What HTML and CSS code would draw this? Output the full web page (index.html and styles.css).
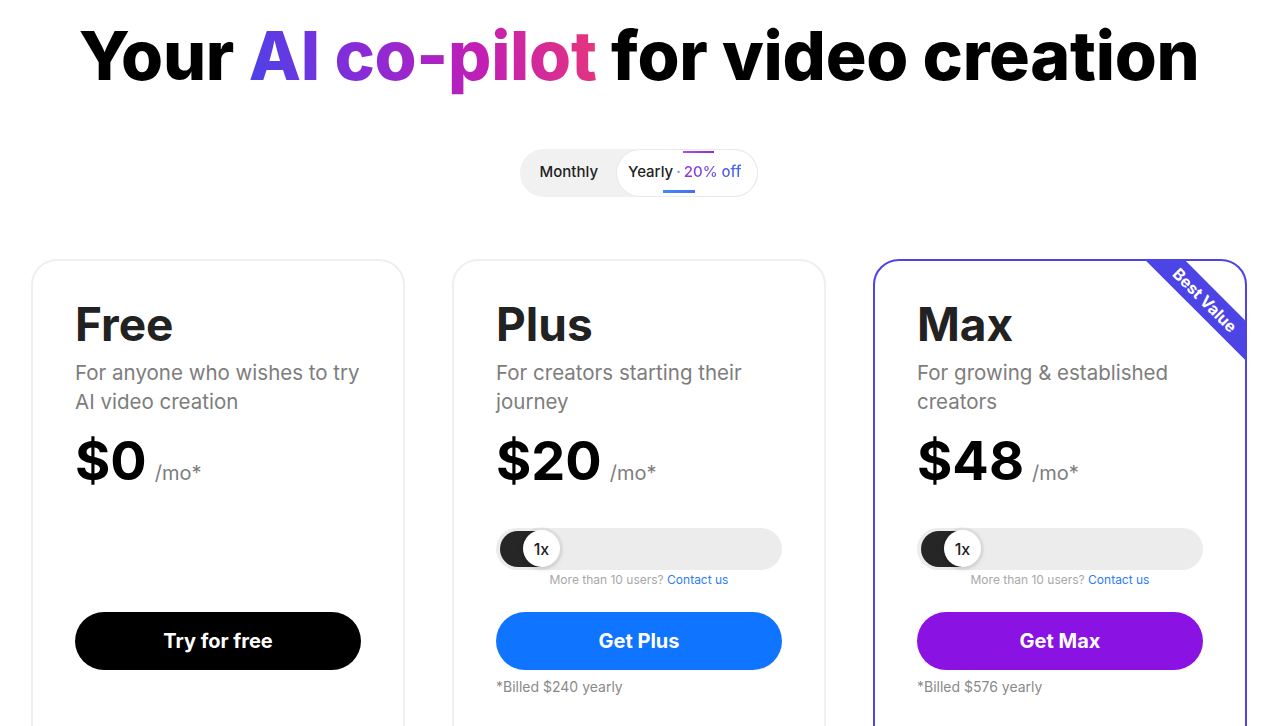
FILE: index.html
```html
<!DOCTYPE html>
<html lang="en">
<head>
<meta charset="utf-8">
<title>Pricing</title>
<link rel="stylesheet" href="styles.css">
</head>
<body>
<main class="page">
  <h1 class="hero">Your <span class="grad">AI co-pilot</span> for video creation</h1>

  <div class="toggle">
    <span class="opt">Monthly</span>
    <span class="opt active"><span class="glow-top"></span><span class="glow-bottom"></span><span>Yearly</span><span class="dot">·</span><span class="off">20% off</span></span>
  </div>

  <section class="cards">
    <article class="card">
      <h2 class="title">Free</h2>
      <p class="desc">For anyone who wishes to try AI video creation</p>
      <div class="price"><span class="amount">$0</span><span class="per">/mo*</span></div>
      <div class="seats"></div>
      <a class="btn btn-black">Try for free</a>
      <p class="billed"></p>
    </article>

    <article class="card">
      <h2 class="title">Plus</h2>
      <p class="desc">For creators starting their journey</p>
      <div class="price"><span class="amount">$20</span><span class="per">/mo*</span></div>
      <div class="seats">
        <div class="track"><span class="fill"></span><span class="knob">1x</span></div>
        <p class="more">More than 10 users? <a class="link">Contact us</a></p>
      </div>
      <a class="btn btn-blue">Get Plus</a>
      <p class="billed">*Billed $240 yearly</p>
    </article>

    <article class="card card-max">
      <div class="ribbon">Best Value</div>
      <h2 class="title">Max</h2>
      <p class="desc">For growing &amp; established creators</p>
      <div class="price"><span class="amount">$48</span><span class="per">/mo*</span></div>
      <div class="seats">
        <div class="track"><span class="fill"></span><span class="knob">1x</span></div>
        <p class="more">More than 10 users? <a class="link">Contact us</a></p>
      </div>
      <a class="btn btn-purple">Get Max</a>
      <p class="billed">*Billed $576 yearly</p>
    </article>
  </section>
</main>
</body>
</html>
```

FILE: styles.css
```css
* { box-sizing: border-box; }

html, body {
  margin: 0;
  padding: 0;
  background: #ffffff;
  font-family: "Inter", "Noto Sans", sans-serif;
  color: #222222;
  overflow: hidden;
}

.page {
  display: flex;
  flex-direction: column;
  align-items: center;
  padding-top: 14px;
  padding-left: 7px;
}

.hero {
  margin: 0;
  font-size: 68px;
  font-weight: 800;
  line-height: 82px;
  letter-spacing: -0.3px;
  color: #000000;
  text-align: center;
}

.grad {
  background: linear-gradient(75deg, #4b42e8 0%, #8b2ad6 35%, #c11fb4 65%, #e8377a 100%);
  -webkit-background-clip: text;
  background-clip: text;
  color: transparent;
}

.toggle {
  margin-top: 53px;
  display: flex;
  align-items: stretch;
  height: 48px;
  padding: 1px;
  background: #f1f1f1;
  border-radius: 24px;
}

.opt {
  display: flex;
  align-items: center;
  font-size: 15px;
  font-weight: 500;
  color: #222;
  padding: 0 19px 3px 19px;
}

.opt.active {
  position: relative;
  background: #ffffff;
  border-radius: 23px;
  padding: 0 16px 3px 11px;
  box-shadow: 0 0 0 1px #e9e9e9;
  gap: 3px;
}

.dot { color: #999; }

.off {
  background: linear-gradient(90deg, #9b2fd6 0%, #3b6cf2 100%);
  -webkit-background-clip: text;
  background-clip: text;
  color: transparent;
}

.glow-top {
  position: absolute;
  top: 1px;
  left: 66px;
  width: 31px;
  height: 2px;
  background: linear-gradient(90deg, #b04ee0, #8a2fd8);
}

.glow-bottom {
  position: absolute;
  bottom: 3px;
  left: 46px;
  width: 32px;
  height: 3px;
  background: linear-gradient(90deg, #3d8bf7, #4a6ef0);
}

.cards {
  margin-top: 62px;
  display: flex;
  gap: 47px;
  align-items: flex-start;
}

.card {
  position: relative;
  overflow: hidden;
  width: 374px;
  min-height: 520px;
  border: 2px solid #efefef;
  border-radius: 26px;
  padding: 36px 42px 0 42px;
  display: flex;
  flex-direction: column;
}

.card-max {
  border-color: #4c44e4;
}

.ribbon {
  position: absolute;
  top: 25px;
  right: -40px;
  width: 160px;
  height: 28px;
  background: #4c44e4;
  color: #ffffff;
  font-size: 16px;
  font-weight: 700;
  line-height: 28px;
  text-align: center;
  transform: rotate(45deg);
}

.title {
  margin: 0;
  font-size: 46px;
  font-weight: 700;
  line-height: 54px;
  color: #222;
}

.desc {
  margin: 7px 0 0 0;
  font-size: 20.5px;
  line-height: 29px;
  color: #7d7d7d;
  min-height: 58px;
}

.price {
  margin-top: 14px;
  display: flex;
  align-items: baseline;
  gap: 8px;
}

.amount {
  font-size: 54px;
  font-weight: 700;
  line-height: 62px;
  color: #000;
}

.per {
  font-size: 20px;
  color: #7d7d7d;
}

.seats {
  margin-top: 36px;
  height: 84px;
}

.track {
  position: relative;
  height: 42px;
  background: #ececec;
  border-radius: 21px;
}

.fill {
  position: absolute;
  left: 4px;
  top: 3px;
  width: 42px;
  height: 36px;
  background: #262626;
  border-radius: 18px 0 0 18px;
}

.knob {
  position: absolute;
  left: 27px;
  top: 2px;
  width: 37px;
  height: 37px;
  border-radius: 50%;
  background: #ffffff;
  box-shadow: 0 0 0 3px rgba(0,0,0,0.04), 0 2px 6px rgba(0,0,0,0.12);
  display: flex;
  align-items: center;
  justify-content: center;
  font-size: 16px;
  font-weight: 500;
  color: #222;
}

.more {
  margin: 2px 0 0 0;
  font-size: 12px;
  line-height: 16px;
  color: #a8a8a8;
  text-align: center;
}

.link { color: #2f7cf6; }

.btn {
  display: flex;
  align-items: center;
  justify-content: center;
  height: 58px;
  border-radius: 29px;
  font-size: 20px;
  font-weight: 700;
  color: #ffffff;
  text-decoration: none;
}

.btn-black { background: #000000; }
.btn-blue { background: #0f74ff; }
.btn-purple { background: #8a12e2; }

.billed {
  margin: 8px 0 0 0;
  font-size: 14px;
  line-height: 18px;
  color: #8a8a8a;
}
```
